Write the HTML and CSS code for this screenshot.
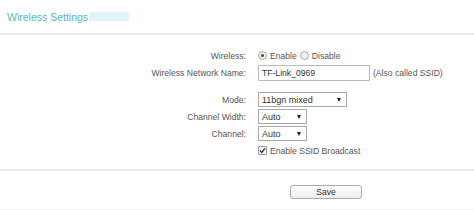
FILE: index.html
```html
<!DOCTYPE html>
<html>
<head>
<meta charset="utf-8">
<link rel="stylesheet" href="styles.css">
</head>
<body>
<div class="page">
  <div class="header">
    <span class="title">Wireless Settings</span><span class="blur"></span>
  </div>
  <div class="form">
    <div class="row">
      <div class="label">Wireless:</div>
      <div class="ctrl">
        <span class="radio checked"></span><span class="opt">Enable</span>
        <span class="radio"></span><span class="opt">Disable</span>
      </div>
    </div>
    <div class="row">
      <div class="label">Wireless Network Name:</div>
      <div class="ctrl">
        <span class="input">TF-Link_0969</span><span class="note">(Also called SSID)</span>
      </div>
    </div>
    <div class="spacer"></div>
    <div class="row">
      <div class="label">Mode:</div>
      <div class="ctrl"><span class="select wide"><span>11bgn mixed</span><span class="arrow"></span></span></div>
    </div>
    <div class="row">
      <div class="label">Channel Width:</div>
      <div class="ctrl"><span class="select"><span>Auto</span><span class="arrow"></span></span></div>
    </div>
    <div class="row">
      <div class="label">Channel:</div>
      <div class="ctrl"><span class="select"><span>Auto</span><span class="arrow"></span></span></div>
    </div>
    <div class="row">
      <div class="label"></div>
      <div class="ctrl">
        <span class="check"><svg width="7" height="7" viewBox="0 0 7 7"><path d="M1 3.6 L2.8 5.4 L6 1.4" fill="none" stroke="#333" stroke-width="1.4"/></svg></span><span class="opt">Enable SSID Broadcast</span>
      </div>
    </div>
  </div>
  <div class="footer">
    <button class="save">Save</button>
  </div>
</div>
</body>
</html>
```
FILE: styles.css
```css
html, body { margin: 0; padding: 0; background: #fff; }
body { font-family: "Liberation Sans", Arial, sans-serif; color: #555; }
.page { width: 474px; height: 210px; overflow: hidden; }
.header {
  height: 33px;
  border-bottom: 2px solid #e8e8e8;
  display: flex; align-items: center;
  padding-left: 7px; box-sizing: content-box;
}
.title { font-size: 10.5px; color: #5ab3c5; }
.blur { display: inline-block; width: 40px; height: 9px; background: #e2f3f8; margin-left: 1px; }
.form { padding-top: 12px; height: 136px; box-sizing: border-box; border-bottom: 2px solid #e8e8e8; }
.row { display: grid; grid-template-columns: 246px 1fr; column-gap: 12px; height: 17px; align-items: center; font-size: 8.6px; }
.spacer { height: 10px; }
.label { text-align: right; color: #555; }
.ctrl { display: flex; align-items: center; }
.radio {
  width: 7px; height: 7px; border-radius: 50%; border: 1px solid #aaa;
  background: #eee; display: inline-block; position: relative; margin-right: 3px;
}
.radio.checked::after {
  content: ""; position: absolute; left: 2px; top: 2px; width: 3px; height: 3px;
  border-radius: 50%; background: #444;
}
.opt { margin-right: 3px; color: #555; }
.input {
  width: 112px; height: 16px; box-sizing: border-box; border: 1px solid #bbb;
  padding-left: 3px; display: flex; align-items: center; color: #333;
}
.note { margin-left: 3px; color: #555; }
.select {
  width: 49px; height: 15px; box-sizing: border-box; border: 1px solid #aaa;
  display: flex; align-items: center; justify-content: space-between;
  padding: 0 5px 0 3px; color: #333; font-size: 9px;
}
.select.wide { width: 89px; }
.arrow {
  width: 0; height: 0; border-left: 2.5px solid transparent; border-right: 2.5px solid transparent;
  border-top: 4px solid #222;
}
.check {
  width: 7px; height: 7px; border: 1px solid #999; background: #f4f4f4; border-radius: 1px;
  display: inline-flex; align-items: center; justify-content: center; margin-right: 3px;
}
.footer {
  height: 39px; display: flex; align-items: center; justify-content: center;
  padding: 3px 0 0 178px; border-bottom: 1px solid #f0f0f0; box-sizing: border-box;
}
.save {
  width: 72px; height: 14px; font-family: "Liberation Sans", Arial, sans-serif; font-size: 8.6px; color: #333;
  border: 1px solid #aaa; border-radius: 3px; background: linear-gradient(#fff, #ececec); padding: 0;
}
```
